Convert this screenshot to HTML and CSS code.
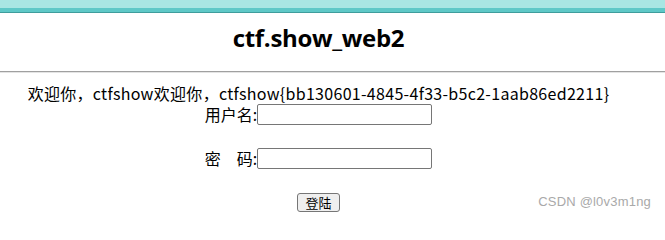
FILE: index.html
```html
<!DOCTYPE html>
<html lang="zh-CN">
<head>
<meta charset="utf-8">
<title>ctf.show_web2</title>
<link rel="stylesheet" href="styles.css">
</head>
<body>
<div class="topbar"></div>
<div class="content">
  <h1 class="title">ctf.show_web2</h1>
</div>
<hr class="rule">
<div class="content">
  <div class="welcome">欢迎你，ctfshow欢迎你，ctfshow{bb130601-4845-4f33-b5c2-1aab86ed2211}</div>
  <form class="login" onsubmit="return false">
    <div class="row"><label class="label" for="u">用户名:</label><input class="field" id="u" type="text"></div>
    <div class="row gap"><label class="label" for="p">密&emsp;码:</label><input class="field" id="p" type="password"></div>
    <div class="row gap"><button class="btn" type="submit">登陆</button></div>
  </form>
</div>
<div class="watermark">CSDN @l0v3m1ng</div>
</body>
</html>
```

FILE: styles.css
```css
html, body {
  margin: 0;
  padding: 0;
  background: #ffffff;
}
body {
  width: 665px;
  height: 220px;
  overflow: hidden;
  position: relative;
  font-family: "Noto Sans CJK SC", "Noto Sans", sans-serif;
  color: #000;
}
.topbar {
  height: 8px;
  background: #a8e6e3;
  border-bottom: 4px solid #5ec8c7;
  box-shadow: 0 1px 0 #3f9d9c;
}
.content {
  width: 637px;
  text-align: center;
}
.title {
  margin: 0;
  padding: 9px 0 16px;
  line-height: 34px;
  font-size: 24px;
  font-weight: bold;
  font-family: "Open Sans", "Noto Sans", sans-serif;
  letter-spacing: -0.3px;
}
.rule {
  margin: 0;
  border: 0;
  height: 1px;
  background: #a0a0a0;
  box-shadow: 0 1px 0 #e4e4e4;
}
.welcome {
  margin-top: 11px;
  font-size: 16px;
  line-height: 20px;
  letter-spacing: 0.3px;
  white-space: nowrap;
}
.login {
  margin: 1px 0 0;
}
.row {
  height: 21px;
  display: flex;
  justify-content: center;
  align-items: center;
  font-size: 16px;
}
.row.gap {
  margin-top: 23px;
}
.label {
  line-height: 21px;
}
.field {
  box-sizing: border-box;
  width: 175px;
  height: 21px;
  margin: 0;
  padding: 1px 2px;
  border: 1px solid #767676;
  border-radius: 2px;
  background: #fff;
  font-size: 13px;
}
.btn {
  box-sizing: border-box;
  width: 43px;
  height: 19px;
  margin: 0;
  padding: 0;
  border: 1px solid #767676;
  border-radius: 3px;
  background: #efefef;
  font-family: "Noto Sans CJK SC", sans-serif;
  font-size: 13px;
  line-height: 17px;
  color: #000;
}
.watermark {
  position: absolute;
  right: 14px;
  bottom: 11px;
  font-family: "Liberation Sans", Arial, sans-serif;
  font-size: 13px;
  color: #a9a9a9;
  letter-spacing: 0.2px;
}
```
